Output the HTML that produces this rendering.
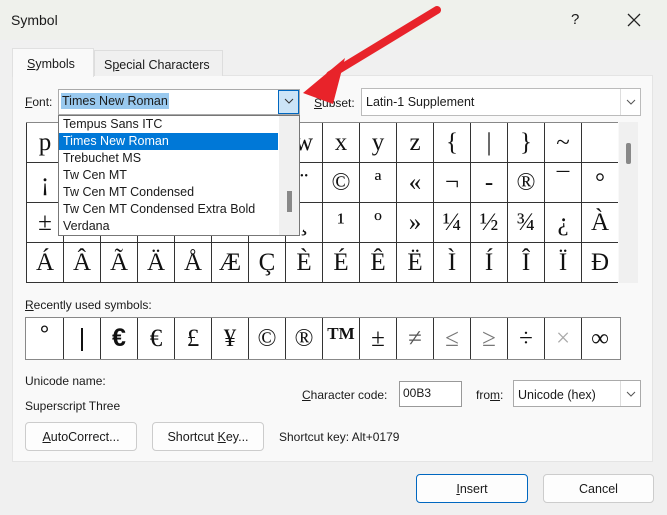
<!DOCTYPE html><html><head><style>
*{margin:0;padding:0;box-sizing:border-box}
body{width:667px;height:515px;background:#f0f0f0;font-family:"Liberation Sans",sans-serif;font-size:12px;color:#1a1a1a;position:relative;overflow:hidden}
.a{position:absolute}
u{text-decoration:underline}
.grid{position:absolute;left:26px;top:122px;width:592px;border-top:1px solid #888;}
.row{display:flex;height:40px;border-bottom:1px solid #333}
.c{width:37px;border-left:1px solid #333;display:flex;align-items:center;justify-content:center;font-family:"Liberation Serif",serif;font-size:25px;color:#111;background:#fff}
.rec{position:absolute;left:25px;top:317px;width:596px;height:43px;border:1px solid #888;display:flex;background:#fff}
.rec .c{height:41px;border-left:1px solid #333}
.rec .c:first-child{border-left:none}
.btn{position:absolute;border:1px solid #ccc;border-radius:4px;background:#fdfdfd;display:flex;align-items:center;justify-content:center;font-size:12.5px}
.box{position:absolute;border:1px solid #999;background:#fff}
</style></head><body>
<div class="a" style="left:0;top:0;width:667px;height:40px;background:#eff1ec"></div>
<div class="a" style="left:11px;top:12px;font-size:14px">Symbol</div>
<div class="a" style="left:571px;top:11px;font-size:15px">?</div>
<svg class="a" style="left:627px;top:13px" width="14" height="14"><path d="M1 1L13 13M13 1L1 13" stroke="#222" stroke-width="1.3"/></svg>
<div class="a" style="left:12px;top:75px;width:641px;height:387px;background:#f9f9f9;border:1px solid #e4e4e4"></div>
<div class="a" style="left:94px;top:50px;width:129px;height:26px;background:#f0f0f0;border:1px solid #ddd;border-bottom:none"></div>
<div class="a" style="left:12px;top:48px;width:82px;height:29px;background:#f9f9f9;border:1px solid #e0e0e0;border-bottom:none"></div>
<div class="a" style="left:27px;top:57px;font-size:12.5px"><u>S</u>ymbols</div>
<div class="a" style="left:104px;top:58px;font-size:12.5px">S<u>p</u>ecial Characters</div>
<div class="a" style="left:25px;top:95px"><u>F</u>ont:</div>
<div class="box" style="left:58px;top:89px;width:242px;height:26px;border-color:#aaa"></div>
<div class="a" style="left:61px;top:93px;background:#99c9ef;padding:1px 1px;font-size:12.5px">Times New Roman</div>
<div class="a" style="left:278px;top:90px;width:21px;height:24px;background:#cce4f7;border:1px solid #0067c0"></div>
<svg class="a" style="left:284px;top:98px" width="10" height="6"><path d="M1 1L5 5L9 1" stroke="#333" fill="none"/></svg>
<div class="a" style="left:314px;top:96px"><u>S</u>ubset:</div>
<div class="box" style="left:361px;top:88px;width:280px;height:28px;border-color:#bbb"></div>
<div class="a" style="left:366px;top:95px;font-size:12.5px">Latin-1 Supplement</div>
<div class="a" style="left:620px;top:89px;width:1px;height:26px;background:#ddd"></div>
<svg class="a" style="left:626px;top:99px" width="10" height="6"><path d="M1 1L5 5L9 1" stroke="#555" fill="none"/></svg>
<div class="grid">
<div class="row"><div class="c">p</div><div class="c">q</div><div class="c">r</div><div class="c">s</div><div class="c">t</div><div class="c">u</div><div class="c">v</div><div class="c">w</div><div class="c">x</div><div class="c">y</div><div class="c">z</div><div class="c">{</div><div class="c">|</div><div class="c">}</div><div class="c">~</div><div class="c"></div></div>
<div class="row"><div class="c">¡</div><div class="c">¢</div><div class="c">£</div><div class="c">¤</div><div class="c">¥</div><div class="c">¦</div><div class="c">§</div><div class="c">¨</div><div class="c">©</div><div class="c">ª</div><div class="c">«</div><div class="c">¬</div><div class="c">-</div><div class="c">®</div><div class="c">¯</div><div class="c">°</div></div>
<div class="row"><div class="c">±</div><div class="c">²</div><div class="c">³</div><div class="c">´</div><div class="c">µ</div><div class="c">¶</div><div class="c">·</div><div class="c">¸</div><div class="c">¹</div><div class="c">º</div><div class="c">»</div><div class="c">¼</div><div class="c">½</div><div class="c">¾</div><div class="c">¿</div><div class="c">À</div></div>
<div class="row"><div class="c">Á</div><div class="c">Â</div><div class="c">Ã</div><div class="c">Ä</div><div class="c">Å</div><div class="c">Æ</div><div class="c">Ç</div><div class="c">È</div><div class="c">É</div><div class="c">Ê</div><div class="c">Ë</div><div class="c">Ì</div><div class="c">Í</div><div class="c">Î</div><div class="c">Ï</div><div class="c">Ð</div></div>
</div>
<div class="a" style="left:619px;top:122px;width:19px;height:161px;background:#f0f0f0"></div>
<div class="a" style="left:626px;top:143px;width:5px;height:21px;background:#888;border-radius:2px"></div>
<div class="a" style="left:58px;top:115px;width:242px;height:121px;background:#fff;border:1px solid #777;font-size:12.5px;line-height:17px">
<div style="padding-left:4px">Tempus Sans ITC</div>
<div style="padding-left:4px;background:#0078d7;color:#fff;width:219px">Times New Roman</div>
<div style="padding-left:4px">Trebuchet MS</div>
<div style="padding-left:4px">Tw Cen MT</div>
<div style="padding-left:4px">Tw Cen MT Condensed</div>
<div style="padding-left:4px">Tw Cen MT Condensed Extra Bold</div>
<div style="padding-left:4px">Verdana</div>
<div class="a" style="left:220px;top:0;width:20px;height:119px;background:#f0f0f0"></div>
<div class="a" style="left:228px;top:75px;width:5px;height:21px;background:#888"></div>
</div>
<div class="a" style="left:25px;top:298px"><u>R</u>ecently used symbols:</div>
<div class="rec"><div class="c" style="align-items:flex-start;padding-top:3px;font-family:'Liberation Sans'">°</div><div class="c" style="font-family:'Liberation Sans'">|</div><div class="c" style="font-family:'Liberation Sans';font-weight:bold">€</div><div class="c">€</div><div class="c">£</div><div class="c">¥</div><div class="c">©</div><div class="c">®</div><div class="c" style="font-size:17px;font-weight:bold;align-items:flex-start;padding-top:6px">TM</div><div class="c">±</div><div class="c" style="color:#555">≠</div><div class="c" style="color:#777">≤</div><div class="c" style="color:#777">≥</div><div class="c">÷</div><div class="c" style="color:#aaa">×</div><div class="c">∞</div></div>
<div class="a" style="left:25px;top:374px">Unicode name:</div>
<div class="a" style="left:25px;top:399px">Superscript Three</div>
<div class="a" style="left:302px;top:388px"><u>C</u>haracter code:</div>
<div class="box" style="left:399px;top:381px;width:63px;height:26px"></div>
<div class="a" style="left:403px;top:386px">00B3</div>
<div class="a" style="left:476px;top:388px">fro<u>m</u>:</div>
<div class="box" style="left:513px;top:380px;width:128px;height:27px;border-color:#aaa"></div>
<div class="a" style="left:518px;top:388px;font-size:12.5px">Unicode (hex)</div>
<div class="a" style="left:620px;top:381px;width:1px;height:25px;background:#ddd"></div>
<svg class="a" style="left:626px;top:391px" width="10" height="6"><path d="M1 1L5 5L9 1" stroke="#555" fill="none"/></svg>
<div class="btn" style="left:25px;top:422px;width:112px;height:29px"><span><u>A</u>utoCorrect...</span></div>
<div class="btn" style="left:152px;top:422px;width:112px;height:29px"><span>Shortcut <u>K</u>ey...</span></div>
<div class="a" style="left:279px;top:430px">Shortcut key: Alt+0179</div>
<div class="btn" style="left:416px;top:474px;width:112px;height:29px;border-color:#0067c0"><span><u>I</u>nsert</span></div>
<div class="btn" style="left:543px;top:474px;width:111px;height:29px"><span>Cancel</span></div>
<svg class="a" style="left:0;top:0" width="667" height="515"><path d="M437 10L330 75" stroke="#e8232a" stroke-width="8" stroke-linecap="round"/><path d="M303 93L345 58L333 104Z" fill="#e8232a"/></svg>
</body></html>
